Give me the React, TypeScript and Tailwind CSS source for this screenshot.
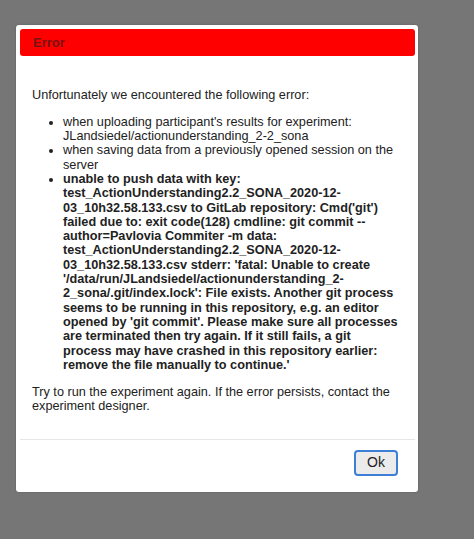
import React from "react";

export default function App() {
  const font = { fontFamily: '"Liberation Sans", Arial, Helvetica, sans-serif' };
  return (
    <div
      className="w-[474px] h-[539px] bg-[#767676] pt-[25px] pl-[16px] overflow-hidden"
      style={font}
    >
      <div className="w-[402px] bg-white rounded-[3px] pt-[4px] px-[3.5px] shadow-[0_0_2px_rgba(0,0,0,0.25)]">
        <div className="h-[26.5px] bg-[#ff0000] rounded-[3px] flex items-center pl-[13.5px] text-[13px] font-bold text-[#7a1212]">
          Error
        </div>
        <div className="px-[12.5px] pt-[19px] pb-[12px] text-[12.7px] leading-[14.3px] text-[#222]">
          <p className="mt-[13px]">Unfortunately we encountered the following error:</p>
          <ul className="list-disc pl-[31px] mt-[13px]">
            <li>
              when uploading participant's results for experiment:
              JLandsiedel/actionunderstanding_2-2_sona
            </li>
            <li>when saving data from a previously opened session on the server</li>
            <li className="font-bold">
              unable to push data with key:
              test_ActionUnderstanding2.2_SONA_2020-12-03_10h32.58.133.csv to GitLab
              repository: Cmd('git') failed due to: exit code(128) cmdline: git commit
              --author=Pavlovia Commiter -m data:
              test_ActionUnderstanding2.2_SONA_2020-12-03_10h32.58.133.csv stderr:
              'fatal: Unable to create
              '/data/run/JLandsiedel/actionunderstanding_2-2_sona/.git/index.lock': File
              exists. Another git process seems to be running in this repository, e.g.
              an editor opened by 'git commit'. Please make sure all processes are
              terminated then try again. If it still fails, a git process may have
              crashed in this repository earlier: remove the file manually to
              continue.'
            </li>
          </ul>
          <p className="mt-[13px] mb-[13px]">
            Try to run the experiment again. If the error persists, contact the
            experiment designer.
          </p>
        </div>
        <div className="border-t border-[#e6e6e6] flex justify-end pt-[10px] pb-[16px] pr-[16.5px]">
          <button className="w-[44px] h-[26px] rounded-[4px] border-2 border-[#3d7fd6] bg-[#ebebeb] text-[14px] text-[#222] flex items-center justify-center">
            Ok
          </button>
        </div>
      </div>
    </div>
  );
}
